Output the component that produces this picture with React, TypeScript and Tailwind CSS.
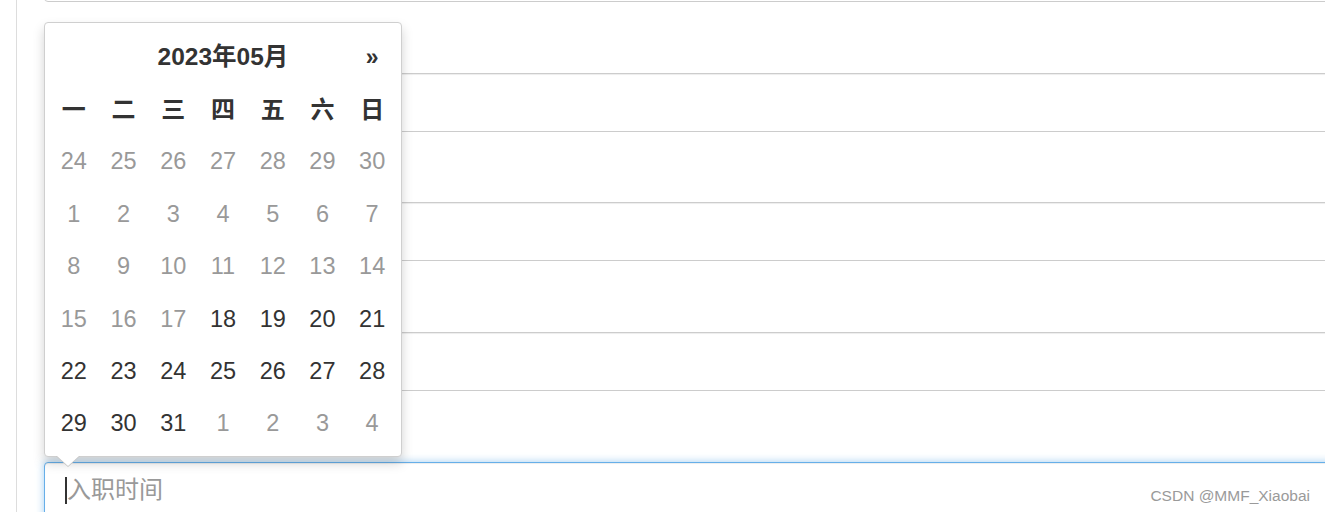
import React from "react";

const weekDays = ["一", "二", "三", "四", "五", "六", "日"];

type Day = { d: number; muted: boolean };

function buildWeeks(): Day[][] {
  const days: Day[] = [];
  for (let d = 24; d <= 30; d++) days.push({ d, muted: true });
  for (let d = 1; d <= 31; d++) days.push({ d, muted: d < 18 });
  for (let d = 1; d <= 4; d++) days.push({ d, muted: true });
  const weeks: Day[][] = [];
  for (let i = 0; i < days.length; i += 7) weeks.push(days.slice(i, i + 7));
  return weeks;
}

function FormInput({ first }: { first?: boolean }) {
  return (
    <div
      className={`h-[59px] w-[1320px] shrink-0 rounded border border-[#cccccc] bg-white shadow-[inset_0_1px_1px_rgba(0,0,0,0.075)] ${
        first ? "-mt-[57px]" : ""
      }`}
    />
  );
}

function DatePicker() {
  const weeks = buildWeeks();
  return (
    <div className="absolute left-[44px] top-[22px] w-[358px] rounded border border-[#cfcfcf] bg-white px-[4px] pb-[6px] pt-[8px] shadow-[0_6px_12px_rgba(0,0,0,0.175)]">
      <div className="grid grid-cols-7">
        <div className="flex h-[52.4px] items-center justify-center" />
        <div className="col-span-5 flex h-[52.4px] items-center justify-center text-[24.5px] font-bold text-[#333]">
          2023年05月
        </div>
        <div className="flex h-[52.4px] items-center justify-center text-[23px] font-bold text-[#333]">»</div>
        {weekDays.map((w) => (
          <div key={w} className="flex h-[52.4px] items-center justify-center text-[24px] font-bold text-[#333]">
            {w}
          </div>
        ))}
        {weeks.flat().map((day, i) => (
          <div
            key={i}
            className={`flex h-[52.4px] items-center justify-center text-[23.5px] ${
              day.muted ? "text-[#999999]" : "text-[#333333]"
            }`}
          >
            {day.d}
          </div>
        ))}
      </div>
      {/* arrow pointing at the input */}
      <div className="absolute left-[11px] top-full h-0 w-0 border-x-[12px] border-t-[11px] border-x-transparent border-t-[#c4c4c4]" />
      <div className="absolute left-[12px] top-full h-0 w-0 border-x-[11px] border-t-[10px] border-x-transparent border-t-white" />
    </div>
  );
}

export default function App() {
  return (
    <div
      className="relative h-[512px] w-[1325px] overflow-hidden bg-white"
      style={{ fontFamily: '"Liberation Sans", Arial, "Noto Sans CJK SC", sans-serif' }}
    >
      <div className="ml-[16px] flex h-full flex-col gap-[70.7px] border-l border-[#dddddd] pl-[27px]">
        <FormInput first />
        <FormInput />
        <FormInput />
        <FormInput />
        <div className="flex h-[59px] w-[1320px] shrink-0 items-center rounded border border-[#66afe9] bg-white pl-[20px] shadow-[inset_0_1px_1px_rgba(0,0,0,0.075),0_0_8px_rgba(102,175,233,0.6)]">
          <span className="mb-[2px] h-[27px] w-[2px] bg-[#333]" />
          <span className="mb-[2px] text-[24px] text-[#999999]">入职时间</span>
        </div>
      </div>
      <DatePicker />
      <div className="absolute right-[15px] top-[484px] text-[15.5px] text-[#9a9a9a] [text-shadow:0_0_1px_#fff]">
        CSDN @MMF_Xiaobai
      </div>
    </div>
  );
}
